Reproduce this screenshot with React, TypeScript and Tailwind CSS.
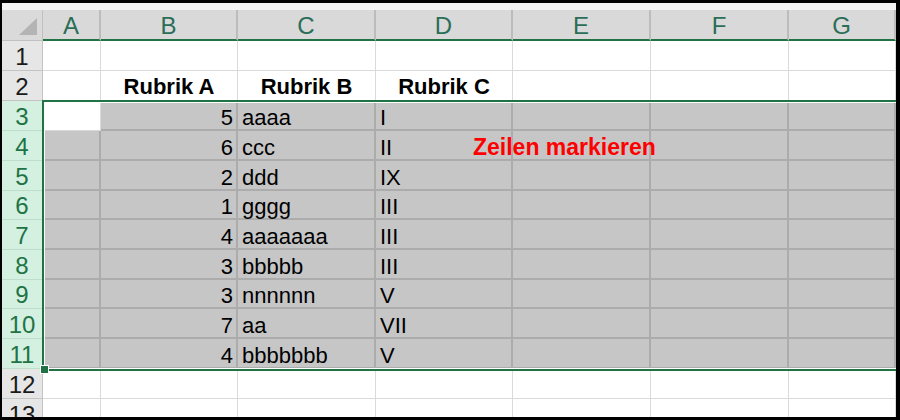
import React from 'react';

const COLS = ['A', 'B', 'C', 'D', 'E', 'F', 'G'];
const DATA: [number, string, string][] = [
  [5, 'aaaa', 'I'],
  [6, 'ccc', 'II'],
  [2, 'ddd', 'IX'],
  [1, 'gggg', 'III'],
  [4, 'aaaaaaa', 'III'],
  [3, 'bbbbb', 'III'],
  [3, 'nnnnnn', 'V'],
  [7, 'aa', 'VII'],
  [4, 'bbbbbbb', 'V'],
];
const SEL_H = ['h-[30px]', 'h-[30px]', 'h-[30px]', 'h-[29px]', 'h-[30px]', 'h-[30px]', 'h-[29px]', 'h-[30px]', 'h-[30px]'];

const GRID = 'grid grid-cols-[41px_58px_137px_138px_137px_138px_138px_1fr] grid-rows-[100%] overflow-hidden';
const rowHead = 'bg-[#e6e6e6] border-r border-b border-[#c4c4c4] flex items-center justify-center pt-[2px] text-[24px] leading-none text-[#1a1a1a]';
const rowHeadSel = 'bg-[#d3f0e0] border-r border-b border-[#bddfca] flex items-center justify-center pt-[2px] text-[24px] leading-none text-[#217346]';
const cell = 'bg-white border-r border-b border-[#dadada] flex items-end pb-[3px] leading-[20px] text-[22px] text-black';
const cellSel = 'bg-[#c6c6c6] border-r-2 border-b-2 border-[#acacac] flex items-end pb-[1px] leading-[20px] text-[22px] text-black';

function WhiteRow({ n, h, children }: { n: number; h: string; children?: React.ReactNode[] }) {
  return (
    <div className={`${GRID} ${h} shrink-0`}>
      <div className={rowHead}>{n}</div>
      {COLS.map((c, i) => (
        <div key={c} className={cell}>
          {children ? children[i] : null}
        </div>
      ))}
    </div>
  );
}

export default function App() {
  return (
    <div className="w-[900px] h-[420px] bg-black pt-[3px] pl-[2px] pr-[4px] pb-[3px] font-['Liberation_Sans',Arial,sans-serif]">
      <div className="relative overflow-hidden bg-white h-full flex flex-col">
        <div className="h-[7px] bg-[#f2f2f2] shrink-0" />
        {/* column header */}
        <div className={`${GRID} h-[31px] shrink-0`}>
          <div className="relative bg-[#dadada] border-r border-b border-[#c0c0c0]">
            <svg className="absolute left-[17px] top-[8px]" width="18" height="17" viewBox="0 0 18 17">
              <polygon points="18,0 18,17 0,17" fill="#b4b4b4" />
            </svg>
          </div>
          {COLS.map((c) => (
            <div
              key={c}
              className="bg-[#d9d9d9] border-r-2 border-[#bcbcbc] border-b-2 border-b-[#217346] flex items-center justify-center pt-[2px] text-[24px] leading-none text-[#2b6e58]"
            >
              {c}
            </div>
          ))}
        </div>
        <WhiteRow n={1} h="h-[30px]" />
        <WhiteRow
          n={2}
          h="h-[30px]"
          children={[
            null,
            <span key="a" className="w-full text-center font-bold">Rubrik A</span>,
            <span key="b" className="w-full text-center font-bold">Rubrik B</span>,
            <span key="c" className="w-full text-center font-bold">Rubrik C</span>,
            null,
            null,
            null,
          ]}
        />
        {DATA.map(([num, txt, rom], r) => (
          <div key={r} className={`${GRID} ${SEL_H[r]} shrink-0`}>
            <div className={rowHeadSel}>{r + 3}</div>
            <div className={r === 0 ? cell : cellSel} />
            <div className={`${cellSel} justify-end pr-[3px]`}>{num}</div>
            <div className={`${cellSel} pl-[4px]`}>{txt}</div>
            <div className={`${cellSel} pl-[4px]`}>{rom}</div>
            <div className={cellSel} />
            <div className={cellSel} />
            <div className={cellSel} />
          </div>
        ))}
        <WhiteRow n={12} h="h-[30px]" />
        <WhiteRow n={13} h="h-[30px]" />

        {/* selection border */}
        <div className="absolute left-[40px] top-[97px] w-[900px] h-[271px] border-2 border-[#217346] shadow-[inset_0_0_0_1px_#ffffff] pointer-events-none" />
        {/* fill handle */}
        <div className="absolute left-[38px] top-[362px] w-[9px] h-[9px] bg-[#217346] border border-white" />
        {/* annotation */}
        <div className="absolute left-[471px] top-[129px] h-[30px] flex items-center">
          <span className="text-[23px] leading-[26px] font-bold text-[#ff0000]">Zeilen markieren</span>
        </div>
      </div>
    </div>
  );
}
